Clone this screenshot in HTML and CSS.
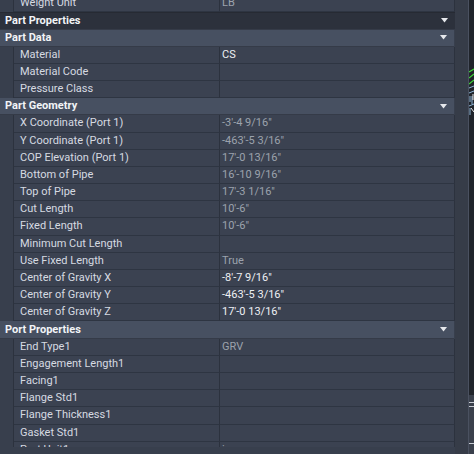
FILE: index.html
```html
<!DOCTYPE html>
<html>
<head>
<meta charset="utf-8">
<link rel="stylesheet" href="styles.css">
</head>
<body>
<div class="wrap">
  <div class="panel">
    <div class="list">
      <div class="row"><div class="ind"></div><div class="lab">Weight Unit</div><div class="val ro">LB</div></div>
      <div class="hdr dark"><span>Part Properties</span><svg class="arr" width="7" height="5" viewBox="0 0 7 5"><path d="M0 0H7L3.5 4.5Z" fill="#e6e8ec"/></svg></div>
      <div class="hdr"><span>Part Data</span><svg class="arr" width="7" height="5" viewBox="0 0 7 5"><path d="M0 0H7L3.5 4.5Z" fill="#e6e8ec"/></svg></div>
      <div class="row"><div class="ind"></div><div class="lab">Material</div><div class="val">CS</div></div>
      <div class="row"><div class="ind"></div><div class="lab">Material Code</div><div class="val"></div></div>
      <div class="row"><div class="ind"></div><div class="lab">Pressure Class</div><div class="val"></div></div>
      <div class="hdr"><span>Part Geometry</span><svg class="arr" width="7" height="5" viewBox="0 0 7 5"><path d="M0 0H7L3.5 4.5Z" fill="#e6e8ec"/></svg></div>
      <div class="row"><div class="ind"></div><div class="lab">X Coordinate (Port 1)</div><div class="val ro">-3'-4 9/16"</div></div>
      <div class="row"><div class="ind"></div><div class="lab">Y Coordinate (Port 1)</div><div class="val ro">-463'-5 3/16"</div></div>
      <div class="row"><div class="ind"></div><div class="lab">COP Elevation (Port 1)</div><div class="val ro">17'-0 13/16"</div></div>
      <div class="row"><div class="ind"></div><div class="lab">Bottom of Pipe</div><div class="val ro">16'-10 9/16"</div></div>
      <div class="row"><div class="ind"></div><div class="lab">Top of Pipe</div><div class="val ro">17'-3 1/16"</div></div>
      <div class="row"><div class="ind"></div><div class="lab">Cut Length</div><div class="val ro">10'-6"</div></div>
      <div class="row"><div class="ind"></div><div class="lab">Fixed Length</div><div class="val ro">10'-6"</div></div>
      <div class="row"><div class="ind"></div><div class="lab">Minimum Cut Length</div><div class="val"></div></div>
      <div class="row"><div class="ind"></div><div class="lab">Use Fixed Length</div><div class="val ro">True</div></div>
      <div class="row"><div class="ind"></div><div class="lab">Center of Gravity X</div><div class="val">-8'-7 9/16"</div></div>
      <div class="row"><div class="ind"></div><div class="lab">Center of Gravity Y</div><div class="val">-463'-5 3/16"</div></div>
      <div class="row"><div class="ind"></div><div class="lab">Center of Gravity Z</div><div class="val">17'-0 13/16"</div></div>
      <div class="hdr"><span>Port Properties</span><svg class="arr" width="7" height="5" viewBox="0 0 7 5"><path d="M0 0H7L3.5 4.5Z" fill="#e6e8ec"/></svg></div>
      <div class="row"><div class="ind"></div><div class="lab">End Type1</div><div class="val ro">GRV</div></div>
      <div class="row"><div class="ind"></div><div class="lab">Engagement Length1</div><div class="val"></div></div>
      <div class="row"><div class="ind"></div><div class="lab">Facing1</div><div class="val"></div></div>
      <div class="row"><div class="ind"></div><div class="lab">Flange Std1</div><div class="val"></div></div>
      <div class="row"><div class="ind"></div><div class="lab">Flange Thickness1</div><div class="val"></div></div>
      <div class="row"><div class="ind"></div><div class="lab">Gasket Std1</div><div class="val"></div></div>
      <div class="row"><div class="ind"></div><div class="lab">Port Unit1</div><div class="val ro">in</div></div>
    </div>
  </div>
  <div class="scroll"></div>
  <div class="canvas">
    <div class="cad">
      <svg width="6" height="50" viewBox="0 0 6 50">
        <path d="M0 4L5 1M0 10L5 6M0 16L5 12" stroke="#3fd23a" stroke-width="1.2" fill="none"/>
        <path d="M0 20L5 18M0 25L5 23M1 28V34M3 28V36M0 38L5 36M1 40V47" stroke="#8fb6d8" stroke-width="1" fill="none"/>
        <path d="M4 26V32M2 40L5 44" stroke="#e8e8e8" stroke-width="1" fill="none"/>
      </svg>
    </div>
    <div class="lower">
      <div class="mk1"></div>
      <div class="mk2"></div>
    </div>
  </div>
</div>
</body>
</html>
```
FILE: styles.css
```css
html, body {
  margin: 0;
  padding: 0;
  background: #383f4d;
  overflow: hidden;
}
body {
  width: 474px;
  height: 454px;
  font-family: Roboto, "Noto Sans", sans-serif;
  font-size: 11px;
}
.wrap {
  display: flex;
  height: 454px;
}
.panel {
  width: 455px;
  height: 447px;
  overflow: hidden;
  flex: none;
}
.list {
  margin-top: -4.8px;
}
.row {
  display: grid;
  grid-template-columns: 14px 205px 1fr;
  height: 17.18px;
  box-sizing: border-box;
}
.ind {
  background: #383f4d;
  border-right: 1px solid #2c323e;
}
.lab, .val {
  background: #3b4251;
  border-bottom: 1px solid #2e3542;
  color: #d6dae1;
  line-height: 16px;
  white-space: nowrap;
  overflow: hidden;
}
.lab {
  padding-left: 6px;
}
.val {
  border-left: 1px solid #2c323e;
  border-right: 1px solid #2c323e;
  padding-left: 2px;
  color: #eef0f4;
}
.val.ro {
  color: #9ca2ad;
}
.hdr {
  height: 17.18px;
  box-sizing: border-box;
  background: #475061;
  border-bottom: 1px solid #353b48;
  color: #f2f4f7;
  font-weight: 700;
  display: flex;
  align-items: center;
  justify-content: space-between;
  padding: 0 7px 0 5px;
  width: 454px;
}
.hdr.dark {
  background: #2c313c;
  border-top: 1px solid #262a33;
  width: 455px;
}
.hdr span {
  line-height: 16px;
}
.arr {
  display: block;
}
.scroll {
  width: 13px;
  flex: none;
  background: #363c48;
  border-right: 1px solid #4a5160;
}
.canvas {
  flex: 1;
  display: flex;
  flex-direction: column;
}
.cad {
  height: 395px;
  background: #20242b;
  padding-top: 68px;
  box-sizing: border-box;
}
.cad svg {
  display: block;
}
.lower {
  flex: 1;
  background: #3a404c;
}
.mk1 {
  margin-top: 7px;
  width: 5px;
  height: 3px;
  border-top: 1px solid #c8ccd4;
  border-bottom: 1px solid #c8ccd4;
}
.mk2 {
  margin-top: 36px;
  width: 5px;
  height: 1px;
  background: #c8ccd4;
}
```
